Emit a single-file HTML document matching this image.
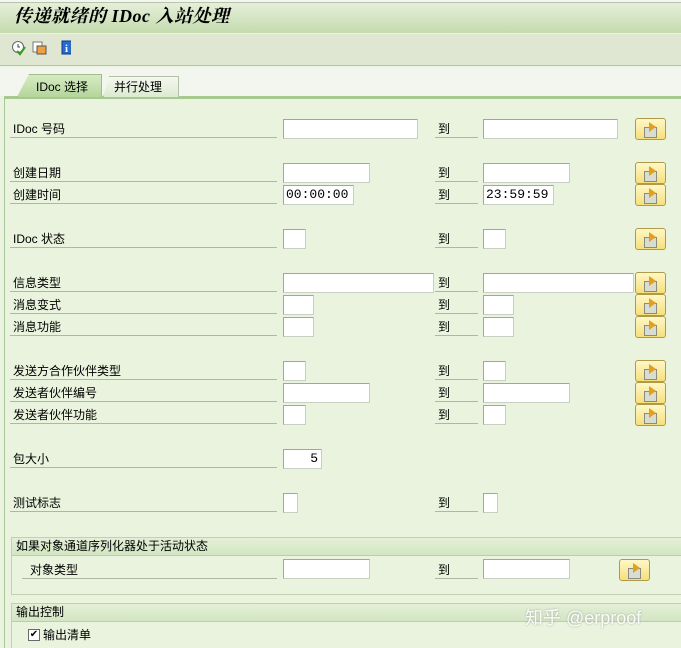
<!DOCTYPE html><html><head><meta charset="utf-8"><style>
*{margin:0;padding:0;box-sizing:border-box}
body{width:681px;height:648px;overflow:hidden;background:#eaf3dd;font:12px "Liberation Sans","Noto Sans CJK SC",sans-serif;color:#000;position:relative}
.a{position:absolute}
.l{position:absolute;height:19px;border-bottom:1px solid #aeb7a6;padding-left:3px;line-height:21px;white-space:nowrap}
.i{position:absolute;height:20px;background:#fff;border:1px solid #9fa99a;border-right-color:#c9d0c3;border-bottom-color:#c9d0c3;font:13px "Liberation Mono",monospace;line-height:18px;padding-left:2px}
.b{position:absolute;width:31px;height:22px;border:1px solid #b09a4a;border-radius:3px;background:linear-gradient(#fff8c8,#f6df7a)}
.b:before{content:"";position:absolute;left:8px;top:8px;width:11px;height:9px;background:#d9dcd0;border:1px solid #8a8a80}
.b:after{content:"";position:absolute;left:13px;top:3px;width:0;height:0;border-top:5px solid transparent;border-bottom:5px solid transparent;border-left:7px solid #e0a020}
</style></head><body>
<div class="a" style="left:0;top:0;width:681px;height:2px;background:#f3f6ee"></div>
<div class="a" style="left:0;top:2px;width:681px;height:31px;background:linear-gradient(#e6efda,#c4dbae);border-top:1px solid #b8c4ac"></div>
<div class="a" style="left:14px;top:4px;font:italic bold 18px 'Liberation Serif','Noto Serif CJK SC',serif;line-height:24px;letter-spacing:0.5px">传递就绪的 IDoc 入站处理</div>
<div class="a" style="left:0;top:33px;width:681px;height:33px;background:#dfe7d3;border-top:1px solid #eef3e8;border-bottom:1px solid #b9c0b0"></div>
<svg class="a" style="left:11px;top:40px" width="60" height="16"><circle cx="7" cy="7" r="5.5" fill="#fff" stroke="#666"/><path d="M7 4v3h2" stroke="#444" fill="none"/><path d="M6 11l3 3 5-7" stroke="#3a9a2a" stroke-width="2.2" fill="none"/><rect x="22" y="2" width="9" height="10" fill="#fff" stroke="#777"/><rect x="26" y="6" width="9" height="8" fill="#f0a040" stroke="#555"/><rect x="51" y="1" width="12" height="13" fill="#2a6acc" stroke="#0a3a8a"/><text x="54" y="12" fill="#fff" font-size="11" font-weight="bold" font-family="Liberation Serif">i</text></svg>
<div class="a" style="left:0;top:67px;width:681px;height:29px;background:#f2f6ee"></div>
<div class="a" style="left:4px;top:96px;width:677px;height:552px;border-left:1px solid #a9c59a;border-top:3px solid #a6c98f"></div>
<div class="a" style="left:17px;top:74px;width:85px;height:23px;background:linear-gradient(#d6ebc4,#b5d69b);border:1px solid #9fbf88;border-bottom:0;clip-path:polygon(12px 0,100% 0,100% 100%,0 100%);padding-left:18px;line-height:24px">IDoc 选择</div>
<div class="a" style="left:103px;top:76px;width:76px;height:21px;background:linear-gradient(#f4f8ef,#dde9d1);border:1px solid #b3c2a6;border-bottom:0;clip-path:polygon(6px 0,100% 0,100% 100%,0 100%);padding-left:10px;line-height:21px">并行处理</div>

<div class="l" style="left:10px;top:119px;width:267px">IDoc 号码</div><div class="i" style="left:283px;top:119px;width:135px"></div>
<div class="l" style="left:435px;top:119px;width:43px">到</div><div class="i" style="left:483px;top:119px;width:135px"></div><div class="b" style="left:635px;top:118px"></div>

<div class="l" style="left:10px;top:163px;width:267px">创建日期</div><div class="i" style="left:283px;top:163px;width:87px"></div>
<div class="l" style="left:435px;top:163px;width:43px">到</div><div class="i" style="left:483px;top:163px;width:87px"></div><div class="b" style="left:635px;top:162px"></div>
<div class="l" style="left:10px;top:185px;width:267px">创建时间</div><div class="i" style="left:283px;top:185px;width:71px">00:00:00</div>
<div class="l" style="left:435px;top:185px;width:43px">到</div><div class="i" style="left:483px;top:185px;width:71px">23:59:59</div><div class="b" style="left:635px;top:184px"></div>

<div class="l" style="left:10px;top:229px;width:267px">IDoc 状态</div><div class="i" style="left:283px;top:229px;width:23px"></div>
<div class="l" style="left:435px;top:229px;width:43px">到</div><div class="i" style="left:483px;top:229px;width:23px"></div><div class="b" style="left:635px;top:228px"></div>

<div class="l" style="left:10px;top:273px;width:267px">信息类型</div><div class="i" style="left:283px;top:273px;width:151px"></div>
<div class="l" style="left:435px;top:273px;width:43px">到</div><div class="i" style="left:483px;top:273px;width:151px"></div><div class="b" style="left:635px;top:272px"></div>
<div class="l" style="left:10px;top:295px;width:267px">消息变式</div><div class="i" style="left:283px;top:295px;width:31px"></div>
<div class="l" style="left:435px;top:295px;width:43px">到</div><div class="i" style="left:483px;top:295px;width:31px"></div><div class="b" style="left:635px;top:294px"></div>
<div class="l" style="left:10px;top:317px;width:267px">消息功能</div><div class="i" style="left:283px;top:317px;width:31px"></div>
<div class="l" style="left:435px;top:317px;width:43px">到</div><div class="i" style="left:483px;top:317px;width:31px"></div><div class="b" style="left:635px;top:316px"></div>

<div class="l" style="left:10px;top:361px;width:267px">发送方合作伙伴类型</div><div class="i" style="left:283px;top:361px;width:23px"></div>
<div class="l" style="left:435px;top:361px;width:43px">到</div><div class="i" style="left:483px;top:361px;width:23px"></div><div class="b" style="left:635px;top:360px"></div>
<div class="l" style="left:10px;top:383px;width:267px">发送者伙伴编号</div><div class="i" style="left:283px;top:383px;width:87px"></div>
<div class="l" style="left:435px;top:383px;width:43px">到</div><div class="i" style="left:483px;top:383px;width:87px"></div><div class="b" style="left:635px;top:382px"></div>
<div class="l" style="left:10px;top:405px;width:267px">发送者伙伴功能</div><div class="i" style="left:283px;top:405px;width:23px"></div>
<div class="l" style="left:435px;top:405px;width:43px">到</div><div class="i" style="left:483px;top:405px;width:23px"></div><div class="b" style="left:635px;top:404px"></div>

<div class="l" style="left:10px;top:449px;width:267px">包大小</div><div class="i" style="left:283px;top:449px;width:39px;text-align:right;padding-right:3px">5</div>
<div class="l" style="left:10px;top:493px;width:267px">测试标志</div><div class="i" style="left:283px;top:493px;width:15px"></div>
<div class="l" style="left:435px;top:493px;width:43px">到</div><div class="i" style="left:483px;top:493px;width:15px"></div>

<div class="a" style="left:11px;top:537px;width:670px;height:58px;border:1px solid #c1d0b3;border-right:0"></div>
<div class="a" style="left:12px;top:538px;width:669px;height:18px;background:linear-gradient(#e4efd8,#d3e6c2);border-bottom:1px solid #bccdae;padding-left:4px;line-height:17px">如果对象通道序列化器处于活动状态</div>
<div class="l" style="left:22px;top:560px;width:255px;padding-left:8px">对象类型</div><div class="i" style="left:283px;top:559px;width:87px"></div>
<div class="l" style="left:435px;top:560px;width:43px">到</div><div class="i" style="left:483px;top:559px;width:87px"></div><div class="b" style="left:619px;top:559px"></div>

<div class="a" style="left:11px;top:603px;width:670px;height:45px;border:1px solid #c1d0b3;border-right:0;border-bottom:0"></div>
<div class="a" style="left:12px;top:604px;width:669px;height:18px;background:linear-gradient(#e4efd8,#d3e6c2);border-bottom:1px solid #bccdae;padding-left:4px;line-height:17px">输出控制</div>
<div class="a" style="left:28px;top:629px;width:12px;height:12px;background:#fff;border:1px solid #6a6a6a;font-size:10px;line-height:10px;text-align:center">✔</div>
<div class="a" style="left:43px;top:627px;line-height:16px">输出清单</div>
<div class="a" style="left:525px;top:604px;font-size:18px;color:#fff;text-shadow:0 0 2px #999;opacity:.9">知乎 @erproof</div>
</body></html>
